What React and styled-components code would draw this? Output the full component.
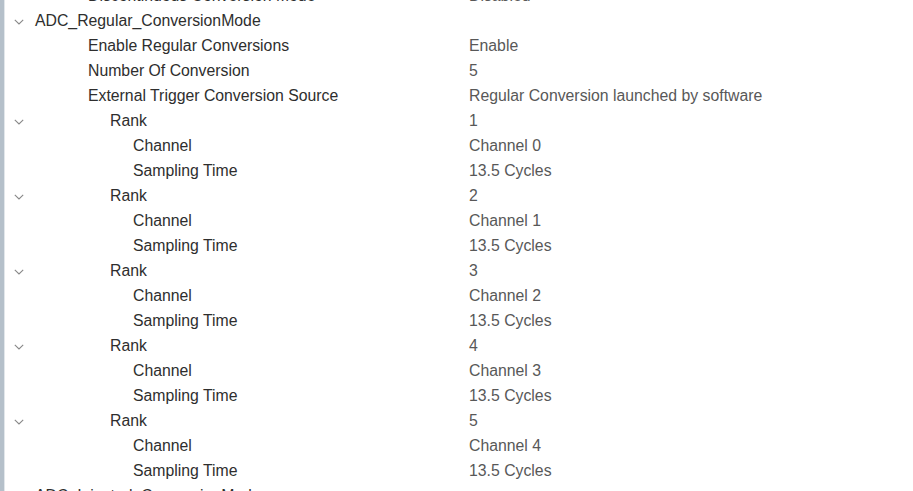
import React from "react";
import styled, { createGlobalStyle } from "styled-components";

const Global = createGlobalStyle`
  html, body { margin: 0; padding: 0; background: #ffffff; overflow: hidden; }
  body { font-family: "Liberation Sans", Arial, sans-serif; }
`;

const Frame = styled.div`
  display: flex;
  width: 913px;
  height: 491px;
  overflow: hidden;
  background: #fff;
`;

const Strip = styled.div`
  width: 4px;
  flex: none;
  background: #b5c0ca;
  border-right: 1px solid #e2e7eb;
`;

const List = styled.div`
  flex: 1;
  display: flex;
  flex-direction: column;
  margin-top: -17px;
`;

const Row = styled.div`
  display: grid;
  grid-template-columns: 464px 1fr;
  height: 25px;
  align-items: center;
  font-size: 15.8px;
  flex: none;
`;

const Name = styled.div`
  display: flex;
  align-items: center;
  color: #2e2e2e;
  white-space: nowrap;
  position: relative;
  padding-left: ${(p) => p.$indent}px;
`;

const Toggle = styled.span`
  position: absolute;
  left: 9px;
  top: 50%;
  width: 10px;
  height: 6px;
  margin-top: -2px;
  display: flex;
`;

const Value = styled.div`
  color: #585858;
  white-space: nowrap;
`;

const Chevron = () => (
  <Toggle>
    <svg width="10" height="6" viewBox="0 0 10 6">
      <path d="M0.8 0.8 L5 5 L9.2 0.8" fill="none" stroke="#888" strokeWidth="1.1" />
    </svg>
  </Toggle>
);

const rows = [
  { n: "Discontinuous Conversion Mode", v: "Disabled", i: 83 },
  { n: "ADC_Regular_ConversionMode", v: "", i: 30, c: true },
  { n: "Enable Regular Conversions", v: "Enable", i: 83 },
  { n: "Number Of Conversion", v: "5", i: 83 },
  { n: "External Trigger Conversion Source", v: "Regular Conversion launched by software", i: 83 },
];
for (let k = 0; k < 5; k++) {
  rows.push({ n: "Rank", v: String(k + 1), i: 105, c: true });
  rows.push({ n: "Channel", v: `Channel ${k}`, i: 128 });
  rows.push({ n: "Sampling Time", v: "13.5 Cycles", i: 128 });
}
rows.push({ n: "ADC_Injected_ConversionMode", v: "", i: 30, c: true });

export default function App() {
  return (
    <>
      <Global />
      <Frame>
        <Strip />
        <List>
          {rows.map((r, idx) => (
            <Row key={idx}>
              <Name $indent={r.i}>
                {r.c && <Chevron />}
                {r.n}
              </Name>
              <Value>{r.v}</Value>
            </Row>
          ))}
        </List>
      </Frame>
    </>
  );
}
